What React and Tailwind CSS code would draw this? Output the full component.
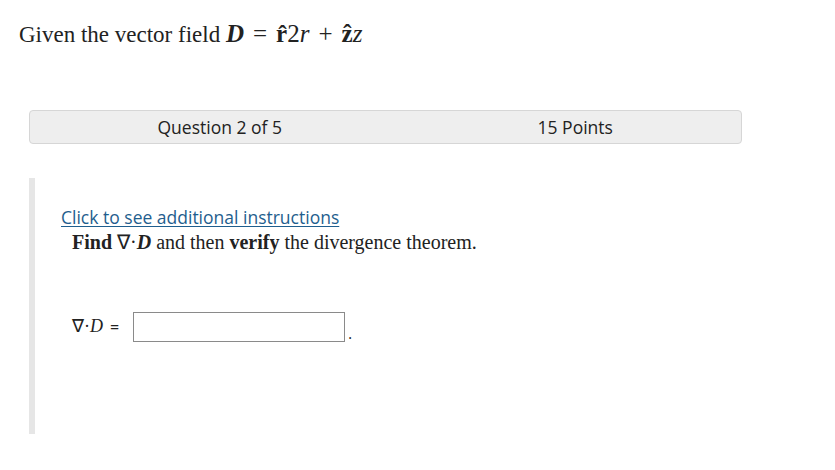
export default function App() {
  return (
    <div className="w-[835px] h-[470px] bg-white relative overflow-hidden">
      <h1 className="pl-[19px] pt-[18px] text-[23px] leading-[32px] text-[#222] font-['Liberation_Serif',serif]">
        Given the vector field{" "}
        <span className="text-[25px]">
          <b className="italic">D</b>
          <span className="mx-[9px]">=</span>
          <b>r̂</b>2<i>r</i>
          <span className="mx-[9px]">+</span>
          <b>ẑ</b><i>z</i>
        </span>
      </h1>

      <div className="mt-[59px] ml-[29px] w-[713px] h-[34px] flex items-center rounded-[4px] border border-[#d6d6d6] bg-[#eeeeee] text-[17.5px] text-[#222] font-['Open_Sans',sans-serif]">
        <div className="w-[380px] text-center">Question 2 of 5</div>
        <div className="w-[332px] text-center">15 Points</div>
      </div>

      <div className="mt-[34px] ml-[29px] flex">
        <div className="w-[6px] h-[256px] bg-[#e6e6e6]" />
        <div className="pl-[26px] pt-[27px]">
          <a href="#" className="text-[17.5px] leading-[24px] text-[#1f5e8e] underline underline-offset-2 font-['Open_Sans',sans-serif]">
            Click to see additional instructions
          </a>
          <p className="pl-[11px] text-[20px] leading-[24px] text-[#222] font-['Liberation_Serif',serif]">
            <b>Find</b> ∇·<b className="italic">D</b> and then <b>verify</b> the divergence theorem.
          </p>
          <div className="mt-[55px] pl-[11px] flex items-center">
            <span className="text-[18px] text-[#222] font-['Liberation_Serif',serif]">
              ∇·<i>D</i>
            </span>
            <span className="ml-[7px] font-['Open_Sans',sans-serif] text-[16px] text-[#222]">=</span>
            <div className="ml-[14px] w-[212px] h-[30px] border border-[#8a8a8a] bg-white" />
            <span className="ml-[3px] mt-[14px] text-[14px] text-[#222]">.</span>
          </div>
        </div>
      </div>
    </div>
  );
}
